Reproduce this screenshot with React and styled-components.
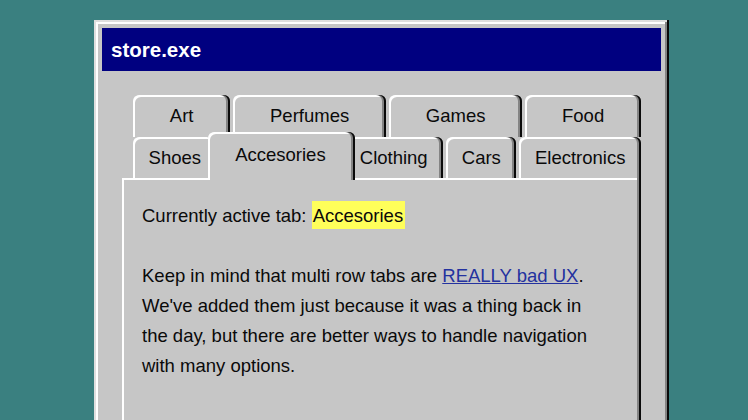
import React, {useState} from 'react';
import styled, {createGlobalStyle} from 'styled-components';

const GlobalStyle = createGlobalStyle`
  html, body {
    margin: 0;
    background: #3a8080;
  }
  body {
    font-family: "Liberation Sans", Arial, sans-serif;
    overflow: hidden;
  }
`;

const rows = [
  ['Art', 'Perfumes', 'Games', 'Food'],
  ['Shoes', 'Accesories', 'Clothing', 'Cars', 'Electronics'],
];

const Desktop = styled.div`
  height: 420px;
  padding: 20px 0 0 94px;
  box-sizing: border-box;
`;

const Window = styled.div`
  width: 575px;
  height: 480px;
  padding: 8px;
  box-sizing: border-box;
  display: flex;
  flex-direction: column;
  background: #c6c6c6;
  box-shadow: inset -2px -2px 0 #0a0a0a, inset 2px 2px 0 #dfdfdf,
    inset -4px -4px 0 #848484, inset 4px 4px 0 #fff;
`;

const TitleBar = styled.div`
  height: 43px;
  flex: none;
  display: flex;
  align-items: center;
  padding-left: 9px;
  background: #000080;
  color: #fff;
  font-weight: bold;
  font-size: 20.5px;
`;

const Content = styled.div`
  flex: 1;
  display: flex;
  flex-direction: column;
  padding: 24px 20px 0;
`;

const TabList = styled.div`
  display: flex;
  flex-direction: column;
  padding-left: 11px;
`;

const TabRow = styled.div`
  display: flex;
  gap: 3px;
  height: ${p => p.$h}px;
`;

const Tab = styled.button`
  flex: 1 1 auto;
  display: flex;
  align-items: center;
  justify-content: center;
  padding: 0 14px;
  border: 0;
  border-radius: 6px 6px 0 0;
  background: #c6c6c6;
  color: #0a0a0a;
  font: inherit;
  font-size: 18.5px;
  cursor: pointer;
  box-shadow: inset -2px 0 0 #0a0a0a, inset -4px 0 0 #848484,
    inset 2px 2px 0 #fff;

  ${p => p.$active && `
    position: relative;
    z-index: 2;
    margin: -5px -14px -2px -12px;
    padding: 0 28px 2px 26px;
  `}
`;

const Panel = styled.div`
  flex: 1;
  position: relative;
  z-index: 1;
  padding: 23px 20px 21px 20px;
  background: #c6c6c6;
  color: #0a0a0a;
  font-size: 18.5px;
  line-height: 30px;
  box-shadow: inset -2px 0 0 #0a0a0a, inset -4px 0 0 #848484,
    inset 2px 2px 0 #fff;
`;

const Para = styled.p`
  max-width: 465px;
  margin: 0 0 30px;
`;

const Mark = styled.span`
  background: #ffff5a;
  padding: 4px 2px 3px 1px;
`;

const Link = styled.a`
  color: #24329f;
  text-decoration: underline;
`;

export default function App() {
  const [active, setActive] = useState('Accesories');
  return (
    <>
      <GlobalStyle/>
      <Desktop>
        <Window>
          <TitleBar>store.exe</TitleBar>
          <Content>
            <TabList>
              {rows.map((row, i) => (
                <TabRow key={i} $h={i === 0 ? 42 : 41}>
                  {row.map(name => (
                    <Tab key={name} $active={name === active} onClick={() => setActive(name)}>
                      {name}
                    </Tab>
                  ))}
                </TabRow>
              ))}
            </TabList>
            <Panel>
              <Para>Currently active tab: <Mark>{active}</Mark></Para>
              <Para>
                Keep in mind that multi row tabs are <Link href="#">REALLY bad UX</Link>.
                We've added them just because it was a thing back in the day, but there
                are better ways to handle navigation with many options.
              </Para>
            </Panel>
          </Content>
        </Window>
      </Desktop>
    </>
  );
}
